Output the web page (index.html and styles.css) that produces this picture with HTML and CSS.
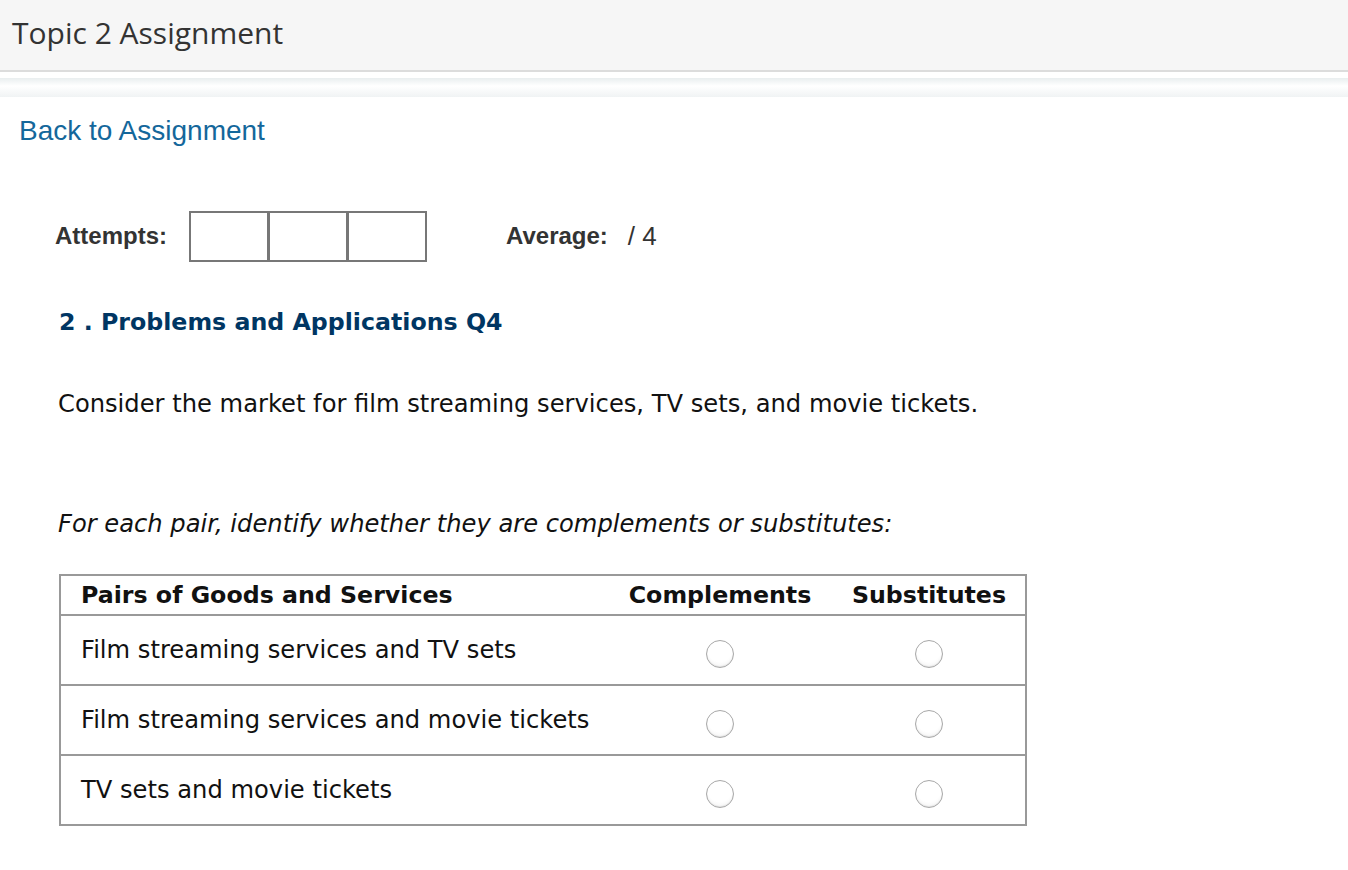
FILE: index.html
```html
<!DOCTYPE html>
<html>
<head>
<meta charset="utf-8">
<link rel="stylesheet" href="styles.css">
</head>
<body>
<header class="topbar">
  <h1 class="title">Topic 2 Assignment</h1>
</header>
<div class="divider"></div>
<div class="strip"></div>
<main class="content">
  <a class="back" href="#">Back to Assignment</a>
  <div class="stats">
    <span class="label">Attempts:</span>
    <div class="boxes"><span class="box"></span><span class="box"></span><span class="box"></span></div>
    <span class="label avg">Average:</span>
    <span class="score">/ 4</span>
  </div>
  <h2 class="qtitle">2 . Problems and Applications Q4</h2>
  <p class="prompt">Consider the market for film streaming services, TV sets, and movie tickets.</p>
  <p class="instr">For each pair, identify whether they are complements or substitutes:</p>
  <table class="grid">
    <thead>
      <tr><th class="first">Pairs of Goods and Services</th><th class="c1">Complements</th><th class="c2">Substitutes</th></tr>
    </thead>
    <tbody>
      <tr><td class="first">Film streaming services and TV sets</td><td class="c1"><span class="radio"></span></td><td class="c2"><span class="radio"></span></td></tr>
      <tr><td class="first">Film streaming services and movie tickets</td><td class="c1"><span class="radio"></span></td><td class="c2"><span class="radio"></span></td></tr>
      <tr><td class="first">TV sets and movie tickets</td><td class="c1"><span class="radio"></span></td><td class="c2"><span class="radio"></span></td></tr>
    </tbody>
  </table>
</main>
</body>
</html>
```
FILE: styles.css
```css
html, body { margin: 0; padding: 0; background: #fff; }
body { font-family: "Liberation Sans", Arial, sans-serif; }
.topbar { background: #f6f6f6; height: 70px; display: flex; align-items: center; padding-left: 12px; }
.title { margin: 0; font-family: "Open Sans", sans-serif; font-weight: 400; font-size: 30px; color: #333; position: relative; top: -3px; }
.divider { height: 2px; background: #dcdcdc; }
.strip { margin-top: 6px; height: 19px; background: linear-gradient(#e9eeef 0px, #ffffff 8px, #f0f3f4 19px); }
.content { padding: 0 0 0 19px; }
.back { display: block; margin-top: 17px; font-size: 28px; color: #14679b; text-decoration: none; line-height: 34px; }
.stats { display: flex; align-items: center; margin-top: 62px; padding-left: 36px; height: 52px; }
.label { font-weight: 700; font-size: 24px; color: #333; }
.boxes { display: flex; margin-left: 22px; border: 2px solid #777; }
.box { width: 76px; height: 47px; }
.box + .box { border-left: 3px solid #777; }
.avg { margin-left: 79px; }
.score { margin-left: 20px; font-size: 26px; color: #333; }
.qtitle { margin: 46px 0 0 40px; font-family: Verdana, "DejaVu Sans", sans-serif; font-size: 23.7px; font-weight: 700; color: #003663; line-height: 28px; }
.prompt { margin: 54px 0 0 39px; font-family: Verdana, "DejaVu Sans", sans-serif; font-size: 24.2px; color: #111; line-height: 28px; }
.instr { margin: 92px 0 0 39px; font-family: Verdana, "DejaVu Sans", sans-serif; font-size: 24.2px; font-style: italic; color: #111; line-height: 28px; }
.grid { margin: 36px 0 0 40px; width: 968px; table-layout: fixed; border-collapse: collapse; border: 2px solid #999; font-family: Verdana, "DejaVu Sans", sans-serif; font-size: 24.2px; color: #111; }
.grid th { height: 38px; font-weight: 700; font-size: 23.7px; text-align: left; padding: 0; white-space: nowrap; }
.grid td { height: 68px; padding: 0; }
.grid tbody tr td { border-top: 2px solid #999; }
.grid .first { padding-left: 20px; }
.grid .c1 { width: 226px; text-align: center; }
.grid .c2 { width: 192px; text-align: center; }
.radio { display: inline-block; width: 26px; height: 26px; border-radius: 50%; border: 1px solid #a8a8a8; background: radial-gradient(circle at 50% 35%, #fff 55%, #ececec 100%); box-shadow: inset 0 -1px 1px rgba(0,0,0,0.08); vertical-align: middle; position: relative; top: 3px; }
```
